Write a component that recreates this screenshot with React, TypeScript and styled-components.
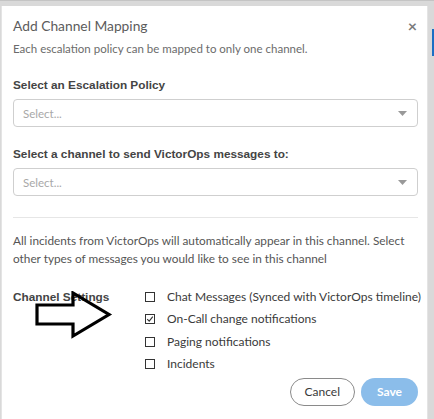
import styled, { createGlobalStyle } from 'styled-components';

const GlobalStyle = createGlobalStyle`
    html, body {
        margin: 0;
        padding: 0;
        background: #d9d9d9;
        font-family: Lato, "Liberation Sans", sans-serif;
    }
`;

const options = [
    { label: 'Chat Messages (Synced with VictorOps timeline)', checked: false },
    { label: 'On-Call change notifications', checked: true },
    { label: 'Paging notifications', checked: false },
    { label: 'Incidents', checked: false },
];

const Caret = () =>
    <svg width="9" height="5" viewBox="0 0 9 5">
        <path d="M0 0 L9 0 L4.5 5 Z" fill="#999" />
    </svg>

const Tick = () =>
    <svg width="8" height="8" viewBox="0 0 8 8">
        <path d="M1.2 4.2 L3.2 6.2 L6.8 1.6" stroke="#333" strokeWidth="1.1" fill="none" />
    </svg>

const App = () =>
    <Page>
        <GlobalStyle />
        <Modal>
            <Header>
                <Title>Add Channel Mapping</Title>
                <Close>×</Close>
            </Header>
            <Subtitle>Each escalation policy can be mapped to only one channel.</Subtitle>

            <Field $top={24}>
                <Label>Select an Escalation Policy</Label>
                <Select>
                    <Placeholder>Select...</Placeholder>
                    <Caret />
                </Select>
            </Field>

            <Field $top={21}>
                <Label>Select a channel to send VictorOps messages to:</Label>
                <Select>
                    <Placeholder>Select...</Placeholder>
                    <Caret />
                </Select>
            </Field>

            <Divider />

            <Info>
                All incidents from VictorOps will automatically appear in this channel. Select
                other types of messages you would like to see in this channel
            </Info>

            <Settings>
                <SettingsLabel>Channel Settings</SettingsLabel>
                <OptionList>
                    {options.map((o) =>
                        <Option key={o.label}>
                            <Box>{o.checked && <Tick />}</Box>
                            <span>{o.label}</span>
                        </Option>
                    )}
                </OptionList>
                <Arrow width="80" height="48" viewBox="0 0 80 48">
                    <path d="M2 14 L38 14 L38 2 L74 23.5 L38 45 L38 33 L2 33 Z"
                        fill="none" stroke="#000" strokeWidth="3.2" strokeLinejoin="miter" />
                </Arrow>
            </Settings>

            <Footer>
                <CancelButton>Cancel</CancelButton>
                <SaveButton>Save</SaveButton>
            </Footer>
        </Modal>
        <SideTab />
    </Page>

const Page = styled.div`
    position: relative;
    width: 434px;
    height: 419px;
    overflow: hidden;
    padding-top: 5px;
    box-sizing: border-box;
    border-top: 1px solid #c4c4c4;
`;

const Modal = styled.div`
    width: 427px;
    height: 420px;
    margin-left: 1px;
    background: #fff;
    box-sizing: border-box;
    padding: 8px 9px 0 11px;
    border-left: 1px solid #e4e4e4;
    border-right: 1px solid #e4e4e4;
`;

const SideTab = styled.div`
    position: absolute;
    right: 0;
    top: 28px;
    width: 2px;
    height: 27px;
    background: #1a6fc4;
`;

const Header = styled.div`
    display: flex;
    align-items: center;
    justify-content: space-between;
    height: 22px;
`;

const Title = styled.h2`
    margin: 0;
    font-size: 13.8px;
    font-weight: 400;
    color: #5c5c5c;
`;

const Close = styled.span`
    font-size: 16px;
    font-weight: 700;
    color: #7a7a7a;
    margin-right: 1px;
`;

const Subtitle = styled.p`
    margin: 6px 0 0;
    font-size: 11.5px;
    color: #6b6b6b;
`;

const Field = styled.div<{ $top: number }>`
    margin-top: ${(p) => p.$top}px;
    display: flex;
    flex-direction: column;
    gap: 7px;
`;

const Label = styled.div`
    font-family: "Liberation Sans", Arial, sans-serif;
    font-size: 11.8px;
    font-weight: 700;
    line-height: 13px;
    color: #444;
`;

const SettingsLabel = styled(Label)`
    line-height: 16px;
`;

const Select = styled.div`
    display: flex;
    align-items: center;
    justify-content: space-between;
    height: 28px;
    box-sizing: border-box;
    border: 1px solid #cfcfcf;
    border-radius: 4px;
    padding: 0 10px 0 9px;
`;

const Placeholder = styled.span`
    font-size: 11.5px;
    color: #a8a8a8;
`;

const Divider = styled.hr`
    margin: 21px 0 0;
    border: 0;
    border-top: 1px solid #e6e6e6;
`;

const Info = styled.p`
    margin: 14px 0 0;
    font-size: 11.8px;
    line-height: 18px;
    color: #555;
`;

const Settings = styled.div`
    position: relative;
    display: grid;
    grid-template-columns: 132px 1fr;
    margin-top: 21px;
`;

const OptionList = styled.div`
    display: flex;
    flex-direction: column;
    gap: 6.3px;
`;

const Option = styled.label`
    display: flex;
    align-items: center;
    gap: 12px;
    font-size: 12px;
    line-height: 16px;
    white-space: nowrap;
    color: #3a3a3a;
`;

const Box = styled.span`
    display: flex;
    align-items: center;
    justify-content: center;
    width: 10px;
    height: 10px;
    border: 1px solid #333;
    box-sizing: border-box;
`;

const Arrow = styled.svg`
    position: absolute;
    left: 22px;
    top: 2px;
`;

const Footer = styled.div`
    display: flex;
    justify-content: flex-end;
    gap: 6px;
    margin-top: 6px;
`;

const CancelButton = styled.button`
    height: 28px;
    padding: 0 14px;
    border: 1px solid #8a8a8a;
    border-radius: 14px;
    background: #fff;
    color: #3a3a3a;
    font-family: inherit;
    font-size: 12px;
`;

const SaveButton = styled.button`
    height: 28px;
    padding: 0 16px;
    border: 0;
    border-radius: 14px;
    background: #8bbdea;
    color: #fff;
    font-family: inherit;
    font-size: 12px;
    font-weight: 700;
`;

export default App;
